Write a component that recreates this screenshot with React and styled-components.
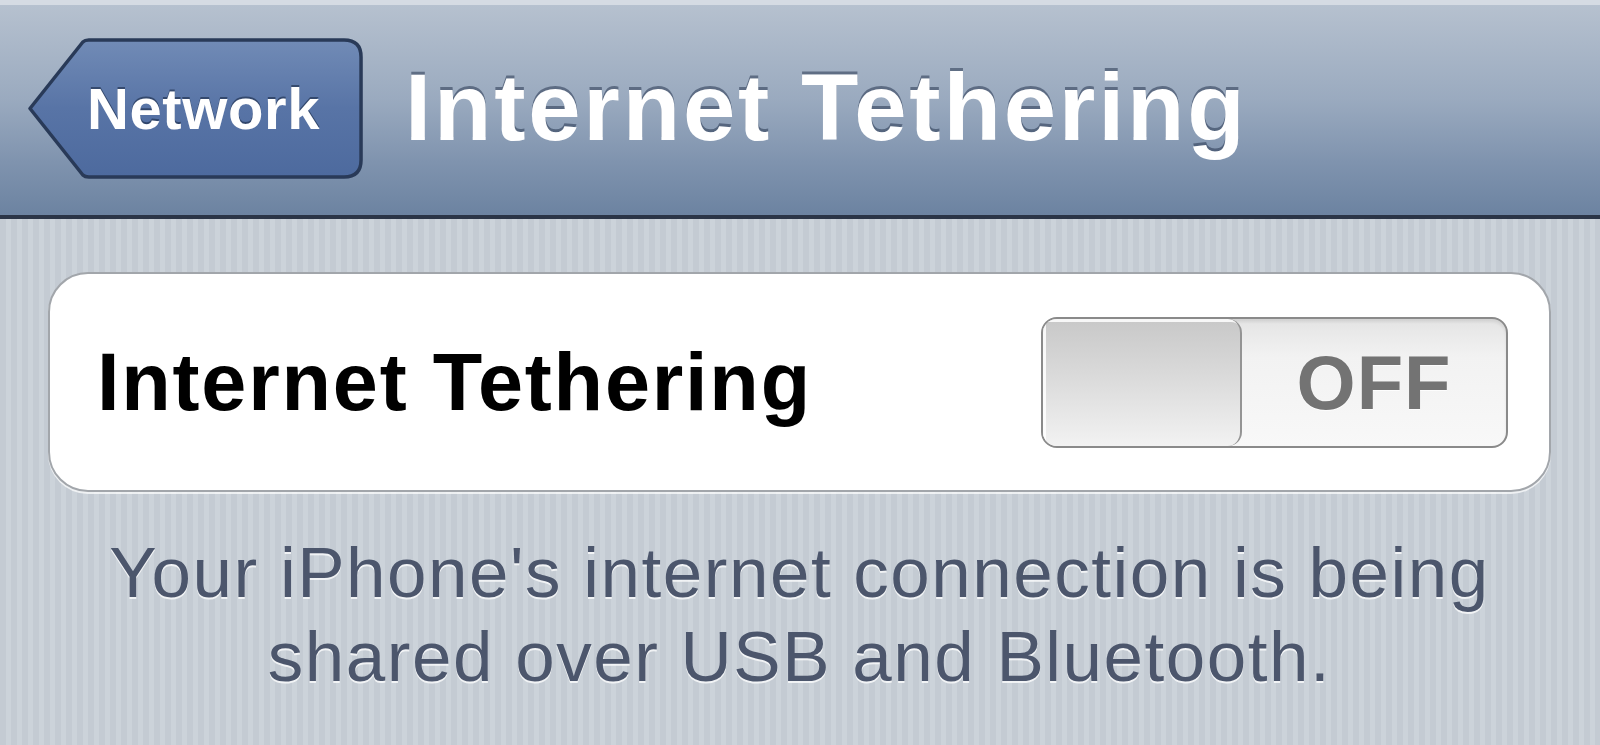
import React from 'react'
import styled, { createGlobalStyle } from 'styled-components'

const GlobalStyle = createGlobalStyle`
	html, body {
		margin: 0;
		padding: 0;
	}
	body {
		font-family: 'Liberation Sans', Arial, Helvetica, sans-serif;
		background: #c7ced6;
	}
`

const Page = styled.div`
	min-height: 100vh;
	background: repeating-linear-gradient(
		90deg,
		#c4cbd3 0px,
		#c4cbd3 6px,
		#ccd3da 6px,
		#ccd3da 11px
	);
	overflow: hidden;
`

const NavBar = styled.header`
	height: 210px;
	display: flex;
	align-items: center;
	gap: 42px;
	padding-left: 27px;
	border-top: 5px solid #d5dbe3;
	border-bottom: 4px solid #2b3547;
	background: linear-gradient(#b6c1cf 0%, #9aaabf 45%, #7f93ae 75%, #6c83a1 100%);
`

const BackButton = styled.button`
	position: relative;
	height: 141px;
	margin-top: -4px;
	padding: 0 43px 0 60px;
	border: 0;
	background: none;
	display: flex;
	align-items: center;
	cursor: pointer;
	font-family: inherit;
	font-size: 58px;
	font-weight: bold;
	letter-spacing: 0.6px;
	color: #fff;
	text-shadow: 0 -2px 0 rgba(20, 35, 60, 0.55);
`

const ButtonShape = styled.svg`
	position: absolute;
	inset: 0;
	width: 100%;
	height: 100%;
	overflow: visible;
`

const ButtonLabel = styled.span`
	position: relative;
`

const Title = styled.h1`
	margin: 0 0 4px;
	font-size: 94px;
	font-weight: bold;
	letter-spacing: 2.8px;
	color: #fff;
	text-shadow: 0 -3px 0 rgba(40, 55, 80, 0.55);
`

const Content = styled.main`
	padding: 53px 49px 0 48px;
`

const Card = styled.section`
	height: 216px;
	display: flex;
	align-items: center;
	justify-content: space-between;
	padding: 0 41px 0 47px;
	background: #fff;
	border: 2px solid #a2a6ab;
	border-radius: 40px;
	box-shadow: 0 2px 0 rgba(255, 255, 255, 0.7);
`

const CardLabel = styled.span`
	font-size: 81px;
	font-weight: bold;
	letter-spacing: 1.8px;
	color: #000;
`

const Switch = styled.div`
	width: 463px;
	height: 127px;
	display: flex;
	border: 2px solid #8a8a8a;
	border-radius: 16px;
	overflow: hidden;
	background: linear-gradient(#e4e4e4 0%, #f2f2f2 30%, #f8f8f8 100%);
	box-shadow: inset 0 3px 3px rgba(0, 0, 0, 0.08);
`

const Knob = styled.div`
	width: 197px;
	border-right: 2px solid #949494;
	border-radius: 0 14px 14px 0;
	background: linear-gradient(#c8c8c8 0%, #dadada 45%, #f2f2f2 100%);
	box-shadow: inset 3px 3px 0 rgba(255, 255, 255, 0.85);
`

const SwitchText = styled.span`
	flex: 1;
	display: flex;
	align-items: center;
	justify-content: center;
	font-size: 76px;
	font-weight: bold;
	letter-spacing: 1px;
	color: #737373;
	text-shadow: 0 1px 0 rgba(255, 255, 255, 0.8);
`

const Footer = styled.p`
	margin: 39px 0 0;
	text-align: center;
	font-size: 71px;
	line-height: 84px;
	letter-spacing: 1.5px;
	color: #4c566c;
	text-shadow: 0 2px 0 rgba(255, 255, 255, 0.75);
`

const BackShape = () => (
	<ButtonShape viewBox='0 0 337 141' preserveAspectRatio='none'>
		<defs>
			<linearGradient id='backFill' x1='0' y1='0' x2='0' y2='1'>
				<stop offset='0' stopColor='#718bb6' />
				<stop offset='0.5' stopColor='#5874a6' />
				<stop offset='1' stopColor='#4d6a9e' />
			</linearGradient>
		</defs>
		<path
			d='M3 70.5 L56 4 Q58 2 62 2 L318 2 Q335 2 335 19 L335 122 Q335 139 318 139 L62 139 Q58 139 56 137 Z'
			fill='url(#backFill)'
			stroke='#293a58'
			strokeWidth='3.5'
			strokeLinejoin='round'
		/>
	</ButtonShape>
)

const App = () => {
	return (
		<Page>
			<GlobalStyle />
			<NavBar>
				<BackButton>
					<BackShape />
					<ButtonLabel>Network</ButtonLabel>
				</BackButton>
				<Title>Internet Tethering</Title>
			</NavBar>
			<Content>
				<Card>
					<CardLabel>Internet Tethering</CardLabel>
					<Switch>
						<Knob />
						<SwitchText>OFF</SwitchText>
					</Switch>
				</Card>
				<Footer>
					Your iPhone's internet connection is being
					<br />
					shared over USB and Bluetooth.
				</Footer>
			</Content>
		</Page>
	)
}

export default App
